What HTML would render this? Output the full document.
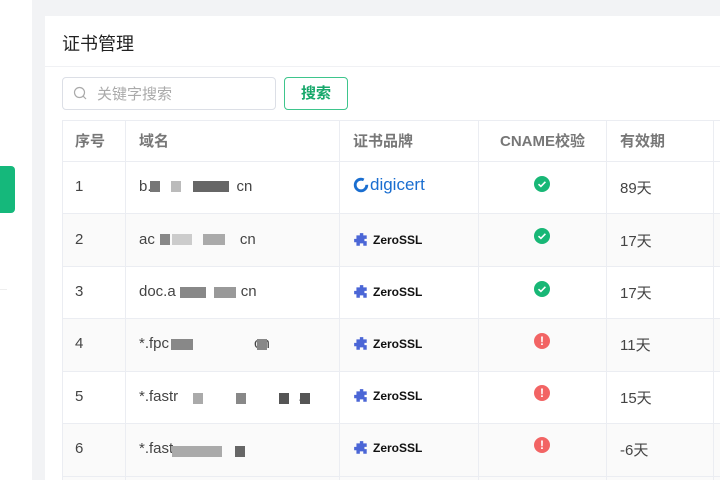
<!DOCTYPE html>
<html><head><meta charset="utf-8"><style>
*{margin:0;padding:0;box-sizing:border-box}
body{width:720px;height:480px;overflow:hidden;background:#fff;font-family:"Liberation Sans","Noto Sans CJK SC",sans-serif;position:relative}
.a{position:absolute}
.gray{background:#f2f3f5}
.txt{font-size:15px;color:#444}
.h{font-size:15px;color:#777;font-weight:bold}
.vl{position:absolute;top:120px;bottom:0;width:1px;background:#ebedf2}
.hl{position:absolute;left:62px;right:0;height:1px;background:#ebedf2}
.blk{position:absolute;height:11px}
.ok,.bad{position:absolute;width:16px;height:16px;border-radius:50%;left:534px}
.ok{background:#18b776}
.bad{background:#f26464;color:#fff;font-size:12px;font-weight:bold;text-align:center;line-height:16px}
.zs{position:absolute;left:353px;font-size:12px;font-weight:bold;color:#111;display:flex;align-items:center;gap:4px}
</style></head><body>
<div class="a gray" style="left:32px;top:0;width:13px;height:480px"></div>
<div class="a gray" style="left:45px;top:0;width:675px;height:16px"></div>
<div class="a" style="left:0;top:166px;width:15px;height:47px;background:#15b87b;border-radius:0 4px 4px 0"></div>
<div class="a" style="left:0;top:289px;width:7px;height:1px;background:#eee"></div>
<div class="a" style="left:62px;top:30px;font-size:18px;color:#222">证书管理</div>
<div class="a" style="left:45px;top:66px;width:675px;height:1px;background:#f0f1f4"></div>
<div class="a" style="left:62px;top:77px;width:214px;height:33px;border:1px solid #dcdfe6;border-radius:4px"></div>
<svg class="a" style="left:73px;top:86px" width="15" height="15" viewBox="0 0 15 15"><circle cx="6.5" cy="6.5" r="5" fill="none" stroke="#aaa" stroke-width="1.2"/><line x1="10.2" y1="10.2" x2="13" y2="13" stroke="#aaa" stroke-width="1.2"/></svg>
<div class="a" style="left:97px;top:83px;font-size:15px;color:#aaa">关键字搜索</div>
<div class="a" style="left:284px;top:77px;width:64px;height:33px;border:1px solid #3ec58c;border-radius:4px;color:#17a86b;font-size:15px;font-weight:bold;text-align:center;line-height:31px">搜索</div>
<!-- table -->
<div class="a" style="left:62px;top:213px;width:658px;height:53px;background:#fafafa"></div>
<div class="a" style="left:62px;top:318px;width:658px;height:53px;background:#fafafa"></div>
<div class="a" style="left:62px;top:423px;width:658px;height:57px;background:#fafafa"></div>
<div class="hl" style="top:120px"></div>
<div class="hl" style="top:161px"></div>
<div class="hl" style="top:213px"></div>
<div class="hl" style="top:266px"></div>
<div class="hl" style="top:318px"></div>
<div class="hl" style="top:371px"></div>
<div class="hl" style="top:423px"></div>
<div class="hl" style="top:476px"></div>
<div class="vl" style="left:62px"></div>
<div class="vl" style="left:125px"></div>
<div class="vl" style="left:339px"></div>
<div class="vl" style="left:478px"></div>
<div class="vl" style="left:606px"></div>
<div class="vl" style="left:713px"></div>
<div class="a h" style="left:75px;top:130px">序号</div>
<div class="a h" style="left:139px;top:130px">域名</div>
<div class="a h" style="left:353px;top:130px">证书品牌</div>
<div class="a h" style="left:500px;top:130px">CNAME校验</div>
<div class="a h" style="left:620px;top:130px">有效期</div>
<!-- rows -->
<div class="a txt" style="left:75px;top:178px">1</div>
<div class="a txt" style="left:75px;top:231px">2</div>
<div class="a txt" style="left:75px;top:283px">3</div>
<div class="a txt" style="left:75px;top:335px">4</div>
<div class="a txt" style="left:75px;top:388px">5</div>
<div class="a txt" style="left:75px;top:440px">6</div>

<div class="a txt" style="left:139px;top:178px">b.<span style="display:inline-block;width:85px"></span>cn</div>
<div class="blk" style="left:150px;top:181px;width:10px;background:#777"></div>
<div class="blk" style="left:171px;top:181px;width:10px;background:#bbb"></div>
<div class="blk" style="left:193px;top:181px;width:36px;background:#666"></div>
<div class="a txt" style="left:139px;top:231px">ac<span style="display:inline-block;width:85px"></span>cn</div>
<div class="blk" style="left:160px;top:234px;width:10px;background:#888"></div>
<div class="blk" style="left:172px;top:234px;width:20px;background:#ccc"></div>
<div class="blk" style="left:203px;top:234px;width:22px;background:#aaa"></div>
<div class="a txt" style="left:139px;top:283px">doc.a<span style="display:inline-block;width:65px"></span>cn</div>
<div class="blk" style="left:180px;top:287px;width:26px;background:#888"></div>
<div class="blk" style="left:214px;top:287px;width:22px;background:#999"></div>
<div class="a txt" style="left:139px;top:335px">*.fpc<span style="display:inline-block;width:85px"></span>cn</div>
<div class="blk" style="left:171px;top:339px;width:22px;background:#888"></div>
<div class="blk" style="left:257px;top:339px;width:10px;background:#888"></div>
<div class="a txt" style="left:139px;top:388px">*.fastr<span style="display:inline-block;width:120px"></span>..</div>
<div class="blk" style="left:193px;top:393px;width:10px;background:#aaa"></div>
<div class="blk" style="left:236px;top:393px;width:10px;background:#888"></div>
<div class="blk" style="left:279px;top:393px;width:10px;background:#555"></div>
<div class="blk" style="left:300px;top:393px;width:10px;background:#555"></div>
<div class="a txt" style="left:139px;top:440px">*.fast</div>
<div class="blk" style="left:172px;top:446px;width:50px;background:#aaa"></div>
<div class="blk" style="left:235px;top:446px;width:10px;background:#666"></div>

<div class="a" style="left:353px;top:175px;font-size:17px;color:#1a6ed0;display:flex;align-items:center;gap:1px"><svg width="16" height="16" viewBox="0 0 16 16"><circle cx="8" cy="8" r="5.8" fill="none" stroke="#1a6ed0" stroke-width="2.8" stroke-dasharray="30 6"/></svg>digicert</div>
<svg width="0" height="0" style="position:absolute"><defs><symbol id="pz" viewBox="0 0 14 14"><path d="M3 3h3V1h3v2h3v3h-2v2h2v4H9v-2H6v2H3V9H1V6h2z" fill="#4b66d6"/></symbol></defs></svg>
<div class="zs" style="top:232px"><svg width="16" height="16"><use href="#pz"/></svg>ZeroSSL</div>
<div class="zs" style="top:284px"><svg width="16" height="16"><use href="#pz"/></svg>ZeroSSL</div>
<div class="zs" style="top:336px"><svg width="16" height="16"><use href="#pz"/></svg>ZeroSSL</div>
<div class="zs" style="top:388px"><svg width="16" height="16"><use href="#pz"/></svg>ZeroSSL</div>
<div class="zs" style="top:440px"><svg width="16" height="16"><use href="#pz"/></svg>ZeroSSL</div>

<div class="ok" style="top:176px"><svg width="16" height="16"><path d="M4.5 8.2l2.4 2.2 4.5-4.6" fill="none" stroke="#fff" stroke-width="1.6"/></svg></div>
<div class="ok" style="top:228px"><svg width="16" height="16"><path d="M4.5 8.2l2.4 2.2 4.5-4.6" fill="none" stroke="#fff" stroke-width="1.6"/></svg></div>
<div class="ok" style="top:281px"><svg width="16" height="16"><path d="M4.5 8.2l2.4 2.2 4.5-4.6" fill="none" stroke="#fff" stroke-width="1.6"/></svg></div>
<div class="bad" style="top:333px">!</div>
<div class="bad" style="top:385px">!</div>
<div class="bad" style="top:437px">!</div>

<div class="a txt" style="left:620px;top:177px">89天</div>
<div class="a txt" style="left:620px;top:230px">17天</div>
<div class="a txt" style="left:620px;top:282px">17天</div>
<div class="a txt" style="left:620px;top:334px">11天</div>
<div class="a txt" style="left:620px;top:387px">15天</div>
<div class="a txt" style="left:620px;top:439px">-6天</div>
</body></html>
